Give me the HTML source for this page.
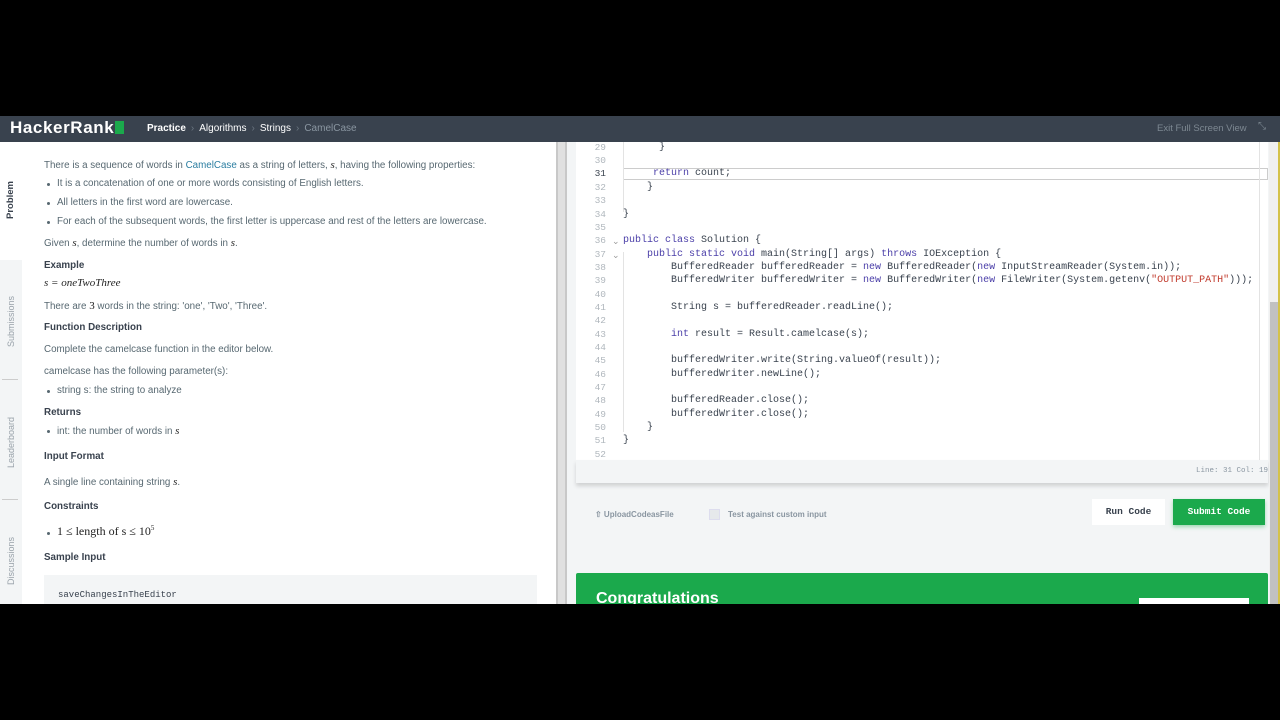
<!DOCTYPE html>
<html><head><meta charset="utf-8"><style>
*{margin:0;padding:0;box-sizing:border-box}
body{width:1280px;height:720px;background:#000;position:relative;overflow:hidden;font-family:"Liberation Sans",sans-serif}
#hdr{position:absolute;left:0;top:116px;width:1280px;height:26px;background:#39424e;color:#fff}
#main{position:absolute;left:0;top:142px;width:1280px;height:462px;background:#f3f5f6;overflow:hidden}
.abs{position:absolute}
#left{position:absolute;left:0;top:0;width:556px;height:462px;background:#fff}
#tabs{position:absolute;left:0;top:0;width:22px;height:462px;background:#f3f5f6}
.vt{position:absolute;transform:rotate(-90deg);transform-origin:left top;font-size:9px;color:#9aa3ab;white-space:nowrap}
.c{position:absolute;left:44px;font-size:9.8px;color:#576871;white-space:nowrap}
.h{position:absolute;left:44px;font-size:9.8px;font-weight:bold;color:#39424e}
.b{position:absolute;left:47px;width:3px;height:3px;border-radius:50%;background:#576871}
.m{font-family:"Liberation Serif",serif;font-style:italic;color:#222;font-size:11px}
#ed{position:absolute;left:576px;top:0;width:692px;height:318px;background:#fff}
.ln{position:absolute;left:0;width:30px;text-align:right;font-family:"Liberation Mono",monospace;font-size:9.5px;color:#b0b7bd;line-height:12px}
.cd{position:absolute;left:47px;font-family:"Liberation Mono",monospace;font-size:10px;color:#39424e;white-space:pre;line-height:12px}
.fa{position:absolute;left:36px;font-size:9px;color:#999;line-height:12px}
.k{color:#4a3ea8}.s{color:#c0392b}
.sep{color:#6b7681;margin:0 5px}
</style></head><body>
<div id="hdr">
<div class="abs" style="left:10px;top:2px;font-size:17px;font-weight:bold;letter-spacing:0.6px">HackerRank<span style="display:inline-block;width:9px;height:13px;background:#1ba94c;margin-left:1px;vertical-align:-1px"></span></div>
<div class="abs" style="left:147px;top:7px;font-size:10px;color:#fff;white-space:nowrap"><b>Practice</b><span class="sep">›</span>Algorithms<span class="sep">›</span>Strings<span class="sep">›</span><span style="color:#8a96a1">CamelCase</span></div>
<div class="abs" style="left:1157px;top:7px;font-size:9.5px;color:#7d8892">Exit Full Screen View</div>
<div class="abs" style="left:1258px;top:5px;font-size:10px;color:#7d8892">⤡</div>
</div>
<div id="main">
<div id="left">
<div id="tabs">
<div class="abs" style="left:0;top:0;width:22px;height:118px;background:#fff"></div>
<div class="vt" style="left:5px;top:77px;color:#39424e;font-weight:bold;font-size:9.5px">Problem</div>
<div class="vt" style="left:6px;top:205px">Submissions</div>
<div class="abs" style="left:2px;top:237px;width:16px;height:1px;background:#ccc"></div>
<div class="vt" style="left:6px;top:326px">Leaderboard</div>
<div class="abs" style="left:2px;top:357px;width:16px;height:1px;background:#ccc"></div>
<div class="vt" style="left:6px;top:443px">Discussions</div>
</div>
<div class="c" style="top:17px">There is a sequence of words in <span style="color:#2b7ea1">CamelCase</span> as a string of letters, <span class="m">s</span>, having the following properties:</div>
<div class="b" style="top:41px"></div><div class="c" style="left:57px;top:36px">It is a concatenation of one or more words consisting of English letters.</div>
<div class="b" style="top:60px"></div><div class="c" style="left:57px;top:55px">All letters in the first word are lowercase.</div>
<div class="b" style="top:79px"></div><div class="c" style="left:57px;top:74px">For each of the subsequent words, the first letter is uppercase and rest of the letters are lowercase.</div>
<div class="c" style="top:95px">Given <span class="m">s</span>, determine the number of words in <span class="m">s</span>.</div>
<div class="h" style="top:118px">Example</div>
<div class="c m" style="top:135px">s = oneTwoThree</div>
<div class="c" style="top:158px">There are <span class="m" style="font-style:normal">3</span> words in the string: 'one', 'Two', 'Three'.</div>
<div class="h" style="top:180px">Function Description</div>
<div class="c" style="top:202px">Complete the camelcase function in the editor below.</div>
<div class="c" style="top:224px">camelcase has the following parameter(s):</div>
<div class="b" style="top:248px"></div><div class="c" style="left:57px;top:243px">string s: the string to analyze</div>
<div class="h" style="top:265px">Returns</div>
<div class="b" style="top:288px"></div><div class="c" style="left:57px;top:283px">int: the number of words in <span class="m">s</span></div>
<div class="h" style="top:309px">Input Format</div>
<div class="c" style="top:334px">A single line containing string <span class="m">s</span>.</div>
<div class="h" style="top:359px">Constraints</div>
<div class="b" style="top:390px"></div><div class="c" style="left:57px;top:382px;font-family:'Liberation Serif',serif;font-size:12px;color:#222">1 ≤ length of s ≤ 10<sup style="font-size:7px">5</sup></div>
<div class="h" style="top:410px">Sample Input</div>
<div class="abs" style="left:44px;top:433px;width:493px;height:40px;background:#f3f5f6"></div>
<div class="c" style="left:58px;top:448px;font-family:'Liberation Mono',monospace;font-size:9px;color:#39424e">saveChangesInTheEditor</div>
</div>
<div class="abs" style="left:556px;top:0;width:11px;height:462px;background:#c8c8c8"></div>
<div class="abs" style="left:558px;top:0;width:7px;height:462px;background:#e0e0e0"></div>
<div id="ed">
<div class="abs" style="left:47px;top:26px;width:645px;height:12px;border:1px solid #ccc"></div>
<div class="abs" style="left:47px;top:0;width:1px;height:70px;background:#e3e3e3"></div>
<div class="abs" style="left:47px;top:110px;width:1px;height:180px;background:#e3e3e3"></div>
<div class="ln" style="top:0">29</div><div class="cd" style="top:0">      }</div>
<div class="ln" style="top:13px">30</div>
<div class="ln" style="top:26px;color:#39424e">31</div><div class="cd" style="top:26px">     <span class="k">return</span> count;</div>
<div class="ln" style="top:40px">32</div><div class="cd" style="top:40px">    }</div>
<div class="ln" style="top:53px">33</div>
<div class="ln" style="top:67px">34</div><div class="cd" style="top:67px">}</div>
<div class="ln" style="top:80px">35</div>
<div class="ln" style="top:93px">36</div><div class="fa" style="top:93px">⌄</div><div class="cd" style="top:93px"><span class="k">public class</span> Solution {</div>
<div class="ln" style="top:107px">37</div><div class="fa" style="top:107px">⌄</div><div class="cd" style="top:107px">    <span class="k">public static void</span> main(String[] args) <span class="k">throws</span> IOException {</div>
<div class="ln" style="top:120px">38</div><div class="cd" style="top:120px">        BufferedReader bufferedReader = <span class="k">new</span> BufferedReader(<span class="k">new</span> InputStreamReader(System.in));</div>
<div class="ln" style="top:133px">39</div><div class="cd" style="top:133px">        BufferedWriter bufferedWriter = <span class="k">new</span> BufferedWriter(<span class="k">new</span> FileWriter(System.getenv(<span class="s">"OUTPUT_PATH"</span>)));</div>
<div class="ln" style="top:147px">40</div>
<div class="ln" style="top:160px">41</div><div class="cd" style="top:160px">        String s = bufferedReader.readLine();</div>
<div class="ln" style="top:173px">42</div>
<div class="ln" style="top:187px">43</div><div class="cd" style="top:187px">        <span class="k">int</span> result = Result.camelcase(s);</div>
<div class="ln" style="top:200px">44</div>
<div class="ln" style="top:213px">45</div><div class="cd" style="top:213px">        bufferedWriter.write(String.valueOf(result));</div>
<div class="ln" style="top:227px">46</div><div class="cd" style="top:227px">        bufferedWriter.newLine();</div>
<div class="ln" style="top:240px">47</div>
<div class="ln" style="top:253px">48</div><div class="cd" style="top:253px">        bufferedReader.close();</div>
<div class="ln" style="top:267px">49</div><div class="cd" style="top:267px">        bufferedWriter.close();</div>
<div class="ln" style="top:280px">50</div><div class="cd" style="top:280px">    }</div>
<div class="ln" style="top:293px">51</div><div class="cd" style="top:293px">}</div>
<div class="ln" style="top:307px">52</div>
<div class="abs" style="left:683px;top:0;width:1px;height:318px;background:#e3e3e3"></div>
</div>
<div class="abs" style="left:576px;top:318px;width:692px;height:23px;background:#f3f5f6;box-shadow:0 3px 4px rgba(0,0,0,0.15)"></div>
<div class="abs" style="left:1196px;top:325px;font-family:'Liberation Mono',monospace;font-size:7.5px;color:#8a96a1;white-space:nowrap">Line: 31 Col: 19</div>
<div class="abs" style="left:595px;top:368px;font-size:8px;color:#8a96a1;font-weight:bold;white-space:nowrap">⇧ UploadCodeasFile</div>
<div class="abs" style="left:709px;top:367px;width:11px;height:11px;background:#e6e9eb;border:1px solid #dde"></div>
<div class="abs" style="left:728px;top:368px;font-size:8px;color:#8a96a1;font-weight:bold;white-space:nowrap">Test against custom input</div>
<div class="abs" style="left:1092px;top:357px;width:73px;height:26px;background:#fff;font-family:'Liberation Mono',monospace;font-size:9.5px;font-weight:bold;color:#39424e;text-align:center;line-height:26px">Run Code</div>
<div class="abs" style="left:1173px;top:357px;width:92px;height:26px;background:#1ba94c;font-family:'Liberation Mono',monospace;font-size:9.5px;font-weight:bold;color:#fff;text-align:center;line-height:26px;box-shadow:0 2px 4px rgba(27,169,76,0.4)">Submit Code</div>
<div class="abs" style="left:576px;top:431px;width:692px;height:40px;background:#1ba94c;border-radius:2px"></div>
<div class="abs" style="left:596px;top:448px;font-size:16px;font-weight:bold;color:#fff">Congratulations</div>
<div class="abs" style="left:1139px;top:456px;width:110px;height:20px;background:#fff"></div>
<div class="abs" style="left:1269px;top:0;width:11px;height:462px;background:#f0f0f0"></div>
<div class="abs" style="left:1270px;top:160px;width:9px;height:302px;background:#c1c1c1"></div>
<div class="abs" style="left:1278px;top:0;width:2px;height:462px;background:#d4c24a"></div>
</div>
</body></html>
